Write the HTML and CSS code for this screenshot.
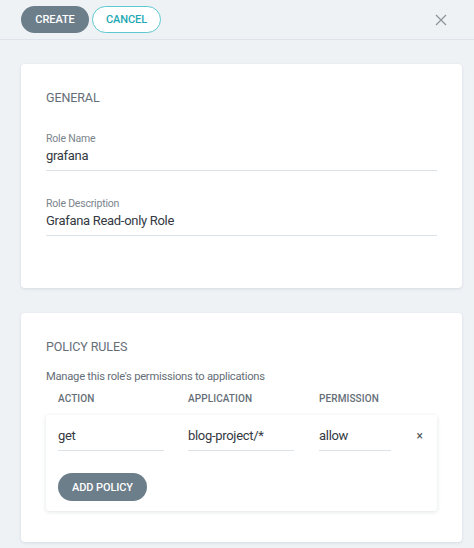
FILE: index.html
```html
<!DOCTYPE html>
<html>
<head>
<meta charset="utf-8">
<link rel="stylesheet" href="styles.css">
</head>
<body>
<div class="topbar">
  <button class="btn btn-dark">CREATE</button>
  <button class="btn btn-outline">CANCEL</button>
  <span class="spacer"></span>
  <svg class="close" width="12" height="12" viewBox="0 0 12 12"><path d="M1 1L11 11M11 1L1 11" stroke="#8d969d" stroke-width="1.3" fill="none"/></svg>
</div>
<div class="main">
  <section class="card card-general">
    <h2 class="card-title">GENERAL</h2>
    <div class="field">
      <div class="field-label">Role Name</div>
      <div class="field-value">grafana</div>
    </div>
    <div class="field">
      <div class="field-label">Role Description</div>
      <div class="field-value">Grafana Read-only Role</div>
    </div>
  </section>
  <section class="card card-policy">
    <h2 class="card-title">POLICY RULES</h2>
    <p class="help">Manage this role's permissions to applications</p>
    <div class="cols heads">
      <span>ACTION</span>
      <span>APPLICATION</span>
      <span>PERMISSION</span>
    </div>
    <div class="rules">
      <div class="cols row">
        <span class="cell cell-wide">get</span>
        <span class="cell cell-wide">blog-project/*</span>
        <span class="cell cell-narrow">allow</span>
        <span class="remove">×</span>
      </div>
      <button class="btn btn-dark btn-add">ADD POLICY</button>
    </div>
  </section>
</div>
</body>
</html>
```
FILE: styles.css
```css
* { box-sizing: border-box; }
html, body { margin: 0; padding: 0; }
body {
  background: #eef2f5;
  font-family: Roboto, "Liberation Sans", sans-serif;
  color: #3a4047;
  width: 474px;
  height: 548px;
  overflow: hidden;
}
.topbar {
  height: 40px;
  border-bottom: 1px solid #dde3e8;
  display: flex;
  align-items: center;
  padding: 0 27px 0 21px;
  gap: 3px;
}
.spacer { flex: 1; }
.close { display: block; }
.btn {
  font-family: Roboto, "Liberation Sans", sans-serif;
  font-size: 11px;
  font-weight: 500;
  height: 27px;
  border-radius: 14px;
  padding: 0;
  letter-spacing: -0.1px;
  cursor: pointer;
}
.btn-dark {
  background: #6c7e8a;
  color: #fff;
  border: none;
  width: 68px;
}
.btn-outline {
  background: #fff;
  color: #1fa8b4;
  border: 1px solid #5cc8cf;
  width: 69px;
}
.main {
  padding: 24px 12px 6px 21px;
}
.card {
  background: #fff;
  border-radius: 4px;
  box-shadow: 0 1px 3px rgba(40, 60, 80, 0.12);
  padding: 26px 25px;
}
.card-general { padding-bottom: 52px; }
.card-policy { margin-top: 25px; padding-bottom: 31px; }
.card-title {
  margin: 0;
  font-size: 12.5px;
  font-weight: 400;
  line-height: 16px;
  color: #656e77;
  letter-spacing: -0.1px;
}
.field { margin-top: 26px; }
.field-label {
  font-size: 10.5px;
  line-height: 14px;
  color: #7b848c;
  letter-spacing: -0.2px;
}
.field-value {
  font-size: 13px;
  line-height: 20px;
  color: #33393f;
  padding-bottom: 4px;
  border-bottom: 1px solid #dbe2e8;
  letter-spacing: -0.3px;
}
.help {
  margin: 14px 0 0;
  font-size: 11.2px;
  line-height: 16px;
  color: #656e77;
  letter-spacing: -0.25px;
}
.cols {
  display: grid;
  grid-template-columns: 130px 131px 1fr;
  padding: 0 12px;
}
.heads {
  margin-top: 7px;
  font-size: 10px;
  font-weight: 500;
  line-height: 14px;
  color: #656e77;
  letter-spacing: 0.1px;
}
.rules {
  margin-top: 9px;
  background: #fff;
  border-radius: 3px;
  box-shadow: 0 1px 4px rgba(40, 60, 80, 0.14);
  padding: 11px 0 10px;
}
.row {
  grid-template-columns: 130px 131px 72px 1fr;
  align-items: start;
}
.cell {
  font-size: 13px;
  line-height: 20px;
  color: #33393f;
  padding-bottom: 4px;
  border-bottom: 1px solid #dbe2e8;
  letter-spacing: -0.3px;
}
.cell-wide { width: 106px; }
.cell-narrow { width: 72px; }
.remove {
  font-size: 12px;
  line-height: 20px;
  color: #4a5056;
  text-align: right;
  padding-right: 2px;
}
.btn-add {
  display: block;
  margin: 22px 0 0 12px;
  width: 89px;
  height: 28px;
}
```
